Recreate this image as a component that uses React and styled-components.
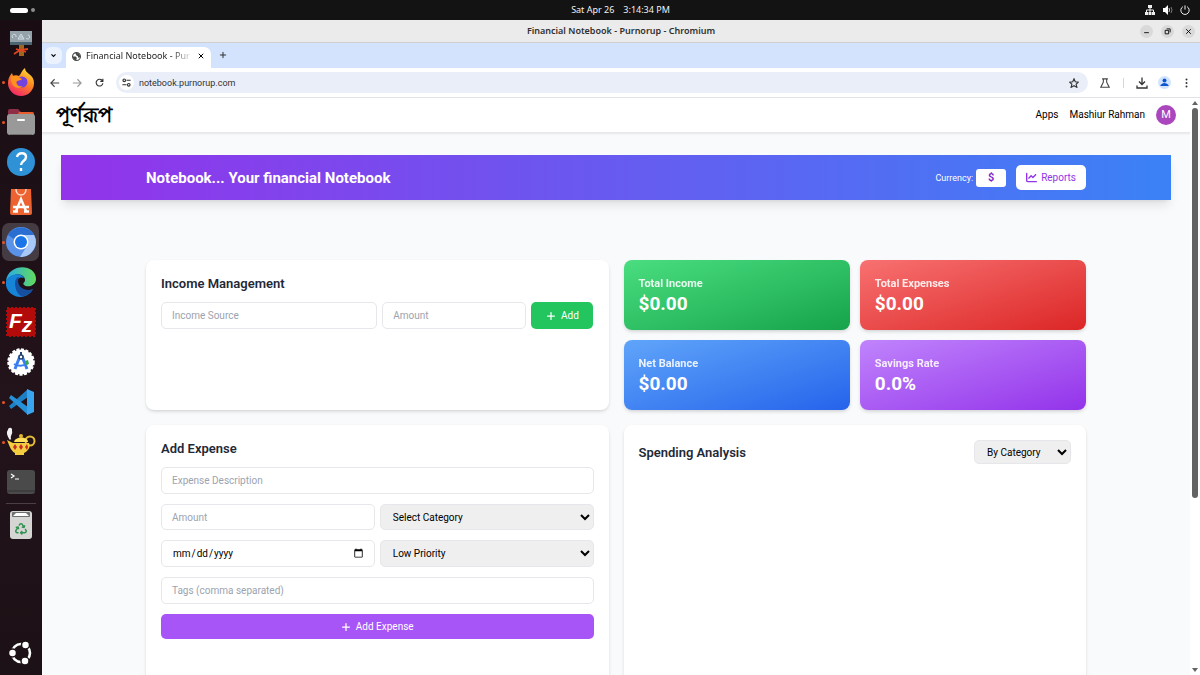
import React from 'react';
import styled, { createGlobalStyle, css } from 'styled-components';
import { FaChartLine, FaPlus, FaRecycle } from 'react-icons/fa6';

const Global = createGlobalStyle`
  *, *::before, *::after { box-sizing: border-box; }
  html, body, #root { height: 100%; }
  body { margin: 0; overflow: hidden; font-family: Roboto, "Liberation Sans", sans-serif; color: #000; }
  button, input, select { font: inherit; margin: 0; }
  h1, h2, h3, p { margin: 0; }
`;

const Desktop = styled.div`
  height: 100vh;
  display: flex;
  flex-direction: column;
  background: #131313;
`;

const TopBar = styled.header`
  flex: none;
  height: 20px;
  padding: 0 10px;
  display: grid;
  grid-template-columns: 1fr auto 1fr;
  align-items: center;
  background: #131313;
  color: #f2f2f2;
  font: 400 9px/12px "Noto Sans", sans-serif;
`;
const Workspaces = styled.div`
  display: flex;
  align-items: center;
  gap: 3px;
`;
const Pill = styled.span`
  width: 18px; height: 5px; border-radius: 3px; background: #fff;
`;
const Dot = styled.span`
  width: 4px; height: 4px; border-radius: 50%; background: #8d8d8d;
`;
const Clock = styled.div`
  margin-left: 41px;
  display: flex;
  gap: 9px;
`;
const Tray = styled.div`
  display: flex;
  justify-content: flex-end;
  align-items: center;
  gap: 7px;
`;

const Body = styled.div`
  flex: 1;
  min-height: 0;
  display: flex;
`;

const Dock = styled.nav`
  flex: none;
  width: 41px;
  padding: 3px 2px 3px;
  display: flex;
  flex-direction: column;
  align-items: center;
  gap: 2px;
  background: linear-gradient(#190d13, #23131b 60%, #1c1116);
`;
const DockItem = styled.button`
  flex: none;
  position: relative;
  width: 37px;
  height: 38px;
  padding: 0;
  border: 0;
  border-radius: 7px;
  display: grid;
  place-items: center;
  background: ${p => (p.$active ? '#453c43' : 'transparent')};
  ${p => p.$running && css`
    &::before {
      content: "";
      position: absolute;
      left: 0; top: 18px;
      width: 3px; height: 3px;
      border-radius: 50%;
      background: #e95420;
    }
  `}
`;
const DockRule = styled.hr`
  width: 30px;
  margin: 0;
  border: 0;
  border-top: 1px solid #4b3f45;
`;
const Spacer = styled.div`
  flex: 1;
`;

const Window = styled.main`
  flex: 1;
  min-width: 0;
  display: flex;
  flex-direction: column;
  margin-left: 1px;
  background: #fff;
`;
const TitleBar = styled.div`
  flex: none;
  height: 23px;
  padding: 0 5px;
  display: grid;
  grid-template-columns: 1fr auto 1fr;
  align-items: center;
  background: #ebebeb;
  border-bottom: 1px solid #cfcfcf;
  color: #2f2f2f;
  font: 600 9px/12px "Noto Sans", sans-serif;
`;
const WindowTitle = styled.span`
  grid-column: 2;
`;
const WindowControls = styled.div`
  display: flex;
  justify-content: flex-end;
  gap: 8px;
`;
const ControlButton = styled.button`
  width: 13px; height: 13px;
  padding: 0; border: 0; border-radius: 50%;
  display: grid; place-items: center;
  background: #d9d9d9;
`;
const TabStrip = styled.div`
  flex: none;
  height: 25px;
  padding: 4px 3px 0;
  display: flex;
  gap: 4px;
  background: #d3e3fd;
`;
const TabSearch = styled.button`
  width: 17px; height: 17px;
  padding: 0; border: 0; border-radius: 6px;
  display: grid; place-items: center;
  background: #ebf2fe;
`;
const Tab = styled.div`
  width: 145px;
  height: 21px;
  padding: 0 7px 3px 6px;
  display: flex;
  align-items: center;
  gap: 5px;
  background: #fff;
  border-radius: 7px 7px 0 0;
  color: #1f1f1f;
  font: 9px/12px "Noto Sans", sans-serif;
`;
const TabTitle = styled.span`
  flex: 1;
  white-space: nowrap;
  mask-image: linear-gradient(90deg, #000 80%, transparent);
`;
const GhostButton = styled.button`
  padding: 0;
  border: 0;
  display: grid;
  place-items: center;
  background: none;
  width: ${p => p.$size || 16}px;
  height: ${p => p.$size || 16}px;
`;
const Toolbar = styled.div`
  flex: none;
  height: 30px;
  padding: 0 6px 0 5px;
  display: flex;
  align-items: center;
  gap: 6px;
  border-bottom: 1px solid #e1e3e8;
`;
const AddressBox = styled.div`
  flex: 1;
  height: 21px;
  margin: 0 3px;
  padding: 0 8px 0 3px;
  display: flex;
  align-items: center;
  gap: 5px;
  border-radius: 11px;
  background: #e9eef9;
`;
const SiteInfo = styled.button`
  width: 15px; height: 15px;
  padding: 0; border: 0; border-radius: 50%;
  display: grid; place-items: center;
  background: #fff;
`;
const AddressInput = styled.input`
  flex: 1;
  min-width: 0;
  padding: 0;
  border: 0;
  outline: 0;
  background: transparent;
  color: #333;
  font: 9px/12px Roboto, sans-serif;
`;
const Divider = styled.span`
  width: 1px; height: 10px; margin: 0 4px; background: #c5daf9;
`;

const Viewport = styled.div`
  flex: 1;
  min-height: 0;
  display: flex;
`;
const Site = styled.div`
  flex: 1;
  min-width: 0;
  overflow: hidden;
  background: #f9fafb;
`;
const Scrollbar = styled.div`
  flex: none;
  width: 10px;
  padding: 3px 2px;
  display: flex;
  flex-direction: column;
  align-items: center;
  gap: 3px;
  background: #fff;
`;
const ScrollTrack = styled.div`
  flex: 1;
  width: 6px;
`;
const ScrollThumb = styled.div`
  height: 70%;
  border-radius: 3px;
  background: #636363;
`;

const SiteHeader = styled.header`
  height: 35px;
  padding: 0 14px;
  display: flex;
  align-items: center;
  gap: 11px;
  background: #fff;
  border-bottom: 1px solid #e5e7eb;
  box-shadow: 0 1px 2px rgba(0, 0, 0, 0.08);
  font-size: 10px;
  line-height: 16px;
`;
const Brand = styled.a`
  margin-right: auto;
  color: #000;
  text-decoration: none;
  font-size: 21px;
  font-weight: 700;
`;
const NavLink = styled.a`
  color: #000;
  text-decoration: none;
`;
const Avatar = styled.span`
  width: 20px; height: 20px;
  border-radius: 50%;
  display: grid; place-items: center;
  background: #ab47bc;
  color: #fff;
  font-size: 11px;
`;

const Banner = styled.section`
  margin: 22px 19px 60px;
  background: linear-gradient(90deg, #9333ea, #3b82f6);
  box-shadow: 0 7px 10px -2px rgba(0, 0, 0, 0.1), 0 3px 4px -3px rgba(0, 0, 0, 0.1);
  color: #fff;
`;
const Container = styled.div`
  max-width: 940px;
  margin: 0 auto;
`;
const BannerRow = styled(Container)`
  height: 45px;
  display: flex;
  align-items: center;
  gap: 10px;
`;
const BannerTitle = styled.h1`
  margin-right: auto;
  font-size: 15px;
  line-height: 20px;
  font-weight: 700;
`;
const Currency = styled.label`
  display: flex;
  align-items: center;
  gap: 3px;
  font-size: 9px;
  line-height: 12px;
`;
const CurrencySelect = styled.select`
  appearance: none;
  width: 30px;
  height: 18px;
  padding: 0;
  border: 0;
  border-radius: 3px;
  background: #fff;
  color: #7e22ce;
  font-size: 11px;
  font-weight: 600;
  text-align: center;
  text-align-last: center;
`;
const ReportsButton = styled.button`
  height: 25px;
  padding: 0 10px;
  border: 0;
  border-radius: 5px;
  display: flex;
  align-items: center;
  gap: 4px;
  background: #fff;
  color: #9333ea;
  font-size: 10px;
`;

const Dashboard = styled(Container)`
  display: grid;
  grid-template-columns: 1fr 1fr;
  grid-template-rows: 150px auto;
  gap: 15px;
`;
const Card = styled.section`
  min-width: 0;
  min-height: ${p => (p.$tall ? '300px' : '0')};
  padding: 15px;
  border-radius: 8px;
  background: #fff;
  box-shadow: 0 2px 4px -1px rgba(0, 0, 0, 0.15), 0 1px 3px -1px rgba(0, 0, 0, 0.1);
`;
const CardTitle = styled.h2`
  font-size: 13px;
  line-height: 17px;
  font-weight: 600;
  color: #1f2937;
`;
const CardHead = styled.div`
  display: flex;
  justify-content: space-between;
  align-items: center;
`;
const IncomeForm = styled.form`
  margin-top: 10px;
  display: grid;
  grid-template-columns: 3fr 2fr 62px;
  grid-template-rows: 27px;
  gap: 5px;
`;
const ExpenseForm = styled.form`
  margin-top: 10px;
  display: grid;
  grid-template-columns: 1fr 1fr;
  grid-template-rows: 27px 26px 27px 27px 25px;
  gap: 10px 5px;
`;
const fieldStyle = css`
  min-width: 0;
  width: 100%;
  height: 100%;
  border: 1px solid #e5e7eb;
  border-radius: 5px;
  font-size: 10px;
  grid-column: ${p => (p.$wide ? '1 / -1' : 'auto')};
`;
const Field = styled.input`
  ${fieldStyle}
  padding: 0 10px;
  background: #fff;
  color: #000;
  &::placeholder { color: #9ca3af; opacity: 1; }
  &::-webkit-calendar-picker-indicator { width: 11px; height: 11px; padding: 0; }
`;
const Select = styled.select`
  ${fieldStyle}
  padding: 0 0 0 8px;
  background: #efefef;
  color: #000;
`;
const ViewSelect = styled(Select)`
  width: 97px;
  height: 24px;
`;
const SubmitButton = styled.button`
  padding: 0;
  border: 0;
  border-radius: 5px;
  display: flex;
  align-items: center;
  justify-content: center;
  gap: 5px;
  background: ${p => p.$color};
  color: #fff;
  font-size: 10px;
  grid-column: ${p => (p.$wide ? '1 / -1' : 'auto')};
`;
const Stats = styled.section`
  display: grid;
  grid-template-columns: 1fr 1fr;
  gap: 10px;
`;
const Stat = styled.article`
  padding: 15px;
  border-radius: 8px;
  background: linear-gradient(to bottom right, ${p => p.$from}, ${p => p.$to});
  box-shadow: 0 2px 4px -1px rgba(0, 0, 0, 0.2);
  color: #fff;
`;
const StatLabel = styled.h3`
  font-size: 11px;
  line-height: 18px;
  font-weight: 700;
  opacity: 0.88;
`;
const StatValue = styled.p`
  font-size: 19px;
  line-height: 22px;
  font-weight: 700;
`;

const Stroke = ({ size = 10, w = 2, color = 'currentColor', children }) => (
  <svg width={size} height={size} viewBox="0 0 24 24" fill="none" stroke={color} strokeWidth={w} aria-hidden="true">{children}</svg>
);

const art = {
  Board: (
    <svg width="26" height="28" viewBox="0 0 26 28">
      <path d="M2 3h22v13H2z" fill="#95a2a9" /><path d="M2 14h22v3H2z" fill="#4c6470" />
      <path d="M5 10a2 2 0 1 1 3-1M10 11l3-5 3 5zM12 9h3M18 10a2 2 0 1 0 2-3" fill="none" stroke="#d4dde2" />
      <path d="M11 17h5v11h-5z" fill="#a0651f" /><path d="M6 26l6-4 8-1M8 21l10 3" fill="none" stroke="#e2451e" strokeWidth="1.800" />
    </svg>
  ),
  Firefox: (
    <svg width="28" height="28" viewBox="0 0 28 28">
      <defs><linearGradient id="ff" x1=".8" y1="0" x2=".3" y2="1"><stop offset="0" stopColor="#ffe23e" /><stop offset=".45" stopColor="#ff8a1e" /><stop offset="1" stopColor="#f0246c" /></linearGradient></defs>
      <path d="M18 0c0 3 2 4 4 6 3 2 5 5 5 9a13 13 0 0 1-26 0c0-3 1-7 4-10l1 3c2-1 4-1 6 0 2-2 3-6 6-8z" fill="url(#ff)" />
      <circle cx="15" cy="14" r="5.500" fill="#7442de" />
      <path d="M4 8c4-1 7 0 11 3-1 2-5 1-6 3 0 3 3 5 7 4-6 5-13 0-12-10z" fill="#ff911f" />
    </svg>
  ),
  Files: (
    <svg width="28" height="26" viewBox="0 0 28 26">
      <path d="M1 2q0-2 2-2h8l3 3h11q2 0 2 2v12H1z" fill="#8e2f47" /><path d="M12 3h13q2 0 2 2v6H8z" fill="#e95c2c" />
      <rect y="5" width="28" height="21" rx="3" fill="#999" /><path d="M3 25.500h22" stroke="#707070" /><rect x="10" y="10" width="8" height="2" rx="1" fill="#fff" />
    </svg>
  ),
  Help: (
    <svg width="28" height="28" viewBox="0 0 28 28">
      <circle cx="14" cy="14" r="14" fill="#2f91d6" />
      <path d="M10 9c1-5 9-5 9 0 0 4-5 4-5 8M14 20v3" fill="none" stroke="#fff" strokeWidth="2.400" />
    </svg>
  ),
  Store: (
    <svg width="24" height="28" viewBox="0 0 24 28">
      <path d="M2 1h20l1 24q0 2-2 2H3q-2 0-2-2z" fill="#ec6331" />
      <path d="M7 1c0 8 10 8 10 0" fill="none" stroke="#ffd9c9" strokeWidth="1.500" />
      <path d="M7 23l5-12 5 12M4 19h16M4 23.500h5M15 23.500h5" fill="none" stroke="#fff" strokeWidth="2.400" />
    </svg>
  ),
  Chromium: (
    <svg width="30" height="30" viewBox="0 0 30 30">
      <circle cx="15" cy="15" r="15" fill="#5a92e8" />
      <path d="M15 8h13a15 15 0 0 1-14 22l7-11z" fill="#a8c8f8" />
      <path d="M2 8a15 15 0 0 1 26 0H15l-7 4z" fill="#2b6ed2" />
      <circle cx="15" cy="15" r="7.500" fill="#fff" /><circle cx="15" cy="15" r="6" fill="#1b74e8" />
    </svg>
  ),
  Edge: (
    <svg width="30" height="30" viewBox="0 0 30 30">
      <defs><linearGradient id="eg"><stop stopColor="#2aa9e8" /><stop offset="1" stopColor="#62dc5b" /></linearGradient></defs>
      <path d="M0 14C2-4 30-4 30 12c0 7-9 9-12 6-2-2 1-2 1-5 0-7-13-8-19 1z" fill="url(#eg)" />
      <path d="M0 14c5-9 16-8 18-3-5-2-8 2-7 7 2 6 9 8 16 4-4 8-14 10-20 6-5-3-8-8-7-14z" fill="#1685d8" />
      <path d="M9 16c0-3 2-6 4-6-3 7 2 13 10 13 2 0 3-1 4-1-3 6-9 8-12 7-4-2-6-8-6-13z" fill="#174fa0" />
    </svg>
  ),
  FileZilla: (
    <svg width="30" height="30" viewBox="0 0 30 30">
      <rect x="1" y="1" width="28" height="28" fill="#b30a0a" stroke="#b30a0a" strokeWidth="2" strokeDasharray="2 2" />
      <text x="3" y="21" fill="#fff" fontFamily="Liberation Sans, sans-serif" fontSize="21" fontWeight="700" fontStyle="italic">F<tspan dy="4">z</tspan></text>
    </svg>
  ),
  Studio: (
    <svg width="28" height="28" viewBox="0 0 28 28">
      <circle cx="14" cy="14" r="12.500" fill="#fff" stroke="#fff" strokeWidth="2.500" strokeDasharray="3 1.500" />
      <path d="M13 8L8 21M15 8l5 13" stroke="#3b7df0" strokeWidth="3" /><path d="M7 16q7 4 14-1" fill="none" stroke="#3b7df0" strokeWidth="2" />
      <circle cx="14" cy="9" r="2" fill="#fff" stroke="#25436e" strokeWidth="1.500" /><path d="M14 4v3" stroke="#25436e" strokeWidth="2" /><path d="M18 13l3-1 1 4-3 1z" fill="#37a852" />
    </svg>
  ),
  Code: (
    <svg width="28" height="28" viewBox="0 0 28 28">
      <path d="M2 18l19-17v8L4 21z" fill="#1d7fc4" /><path d="M2 10l19 17v-8L4 7z" fill="#2691d8" /><path d="M20 1l7 3v20l-7 3z" fill="#38a5ee" />
    </svg>
  ),
  Teapot: (
    <svg width="31" height="30" viewBox="0 0 31 30">
      <path d="M5 13c-3-4-4-8-2-10 0-3 5-3 4 1 1 3-2 4-1 8z" fill="#f2f2f2" />
      <circle cx="25" cy="14" r="4.500" fill="none" stroke="#e7bd32" strokeWidth="2" />
      <path d="M2 13l6 3h16c2 4-1 8-5 10v2H10v-2c-4-2-5-6-8-13z" fill="#f2cd3f" />
      <path d="M9 15c1-6 14-6 14 0z" fill="#ffe05a" /><circle cx="16" cy="9" r="2" fill="#e4b82b" />
      <path d="M10 17l2 3-2 3-2-3zM16 17l2 3-2 3-2-3zM22 17l1 3-1 3-2-3z" fill="#c92a2a" />
    </svg>
  ),
  Terminal: (
    <svg width="28" height="24" viewBox="0 0 28 24">
      <rect width="28" height="24" rx="3" fill="#4a4a4a" /><path d="M0 21h28" stroke="#333" />
      <path d="M4 4l3 2-3 2M8 9h4" fill="none" stroke="#fff" strokeWidth="1.200" />
    </svg>
  ),
  Trash: (
    <svg width="24" height="28" viewBox="0 0 24 28">
      <rect x="1" width="22" height="28" rx="3" fill="#d5d5d3" /><rect x="3" y="1" width="18" height="5" rx="1" fill="#6f6f6f" /><path d="M4 5l3-3h10l3 3z" fill="#fff" />
      <FaRecycle x="6" y="12" size={12} color="#329152" />
    </svg>
  ),
  Ubuntu: (
    <svg width="24" height="24" viewBox="0 0 24 24">
      <circle cx="12" cy="12" r="9" fill="none" stroke="#fff" strokeWidth="2.600" />
      <g fill="#fff" stroke="#1e1217" strokeWidth="1.500"><circle cx="16.500" cy="4" r="4" /><circle cx="3.500" cy="12" r="4" /><circle cx="16" cy="20" r="4" /></g>
    </svg>
  ),
};

const apps = [
  ['Board', art.Board], ['Firefox', art.Firefox, 1], ['Files', art.Files, 1], ['Help', art.Help], ['App Center', art.Store],
  ['Chromium', art.Chromium, 1, 1], ['Edge', art.Edge, 1], ['FileZilla', art.FileZilla], ['Android Studio', art.Studio],
  ['Visual Studio Code', art.Code, 1], ['Teapot', art.Teapot, 1], ['Terminal', art.Terminal],
];
const stats = [
  ['Total Income', '$0.00', '#4ade80', '#16a34a'],
  ['Total Expenses', '$0.00', '#f87171', '#dc2626'],
  ['Net Balance', '$0.00', '#60a5fa', '#2563eb'],
  ['Savings Rate', '0.0%', '#c084fc', '#9333ea'],
];

export default function App() {
  return (
    <Desktop>
      <Global />
      <TopBar>
        <Workspaces><Pill /><Dot /></Workspaces>
        <Clock><span>Sat Apr 26</span><span>3:14:34 PM</span></Clock>
        <Tray>
          <svg width="10" height="10" viewBox="0 0 10 10" fill="#eee"><path d="M3 0h4v3H3zM0 7h3v3H0zM3.500 7h3v3h-3zM7 7h3v3H7z" /><path d="M5 3v4M1.500 7V5h7v2" stroke="#eee" fill="none" /></svg>
          <svg width="11" height="10" viewBox="0 0 11 10" fill="none" stroke="#777"><path d="M1 3h2l3-3v10L3 7H1z" fill="#fff" stroke="none" /><path d="M7 3q1 2 0 4" stroke="#ccc" /><path d="M9 2q2 3 0 6" /></svg>
          <Stroke size={10} w={2.400}><path d="M7 4a10 10 0 1 0 10 0M12 1v10" /></Stroke>
        </Tray>
      </TopBar>
      <Body>
        <Dock aria-label="Dock">
          {apps.map(([name, icon, running, active]) => (
            <DockItem key={name} aria-label={name} $running={running} $active={active}>{icon}</DockItem>
          ))}
          <DockRule />
          <DockItem aria-label="Trash">{art.Trash}</DockItem>
          <Spacer />
          <DockItem aria-label="Show applications">{art.Ubuntu}</DockItem>
        </Dock>
        <Window>
          <TitleBar>
            <WindowTitle>Financial Notebook - Purnorup - Chromium</WindowTitle>
            <WindowControls>
              <ControlButton aria-label="Minimize"><Stroke size={7} w={3}><path d="M4 16h16" /></Stroke></ControlButton>
              <ControlButton aria-label="Restore"><Stroke size={7} w={3}><path d="M4 8h12v12H4zM9 3h12v12" /></Stroke></ControlButton>
              <ControlButton aria-label="Close window"><Stroke size={7} w={3}><path d="M4 4l16 16M20 4L4 20" /></Stroke></ControlButton>
            </WindowControls>
          </TitleBar>
          <TabStrip>
            <TabSearch aria-label="Search tabs"><Stroke size={7} w={4}><path d="M5 8l7 7 7-7" /></Stroke></TabSearch>
            <Tab>
              <svg width="9" height="9" viewBox="0 0 24 24"><circle cx="12" cy="12" r="10.500" fill="#fff" stroke="#454746" strokeWidth="3" /><path d="M2 12h8l3 4-2 6C4 21 2 16 2 12zM9 3l3 6 4 2v4l6-1C22 6 16 1 9 3z" fill="#454746" /></svg>
              <TabTitle>Financial Notebook - Pur</TabTitle>
              <GhostButton $size={6} aria-label="Close tab"><Stroke size={6} w={4}><path d="M3 3l18 18M21 3L3 21" /></Stroke></GhostButton>
            </Tab>
            <GhostButton aria-label="New tab"><FaPlus size={8} color="#333" /></GhostButton>
          </TabStrip>
          <Toolbar>
            <GhostButton aria-label="Back"><Stroke size={10} w={2.600} color="#444"><path d="M22 12H3M11 3l-9 9 9 9" /></Stroke></GhostButton>
            <GhostButton aria-label="Forward"><Stroke size={10} w={2.600} color="#999"><path d="M2 12h19M13 3l9 9-9 9" /></Stroke></GhostButton>
            <GhostButton aria-label="Reload"><Stroke size={9} w={3} color="#333"><path d="M20 8a9 9 0 1 0 1 6M21 2v7h-7" /></Stroke></GhostButton>
            <AddressBox>
              <SiteInfo aria-label="Site information"><Stroke size={9} w={3} color="#333"><circle cx="6" cy="6" r="3.500" /><path d="M12 6h11M1 18h11" /><circle cx="18" cy="18" r="3.500" /></Stroke></SiteInfo>
              <AddressInput aria-label="Address" defaultValue="notebook.purnorup.com" />
              <GhostButton $size={12} aria-label="Bookmark"><Stroke size={10} w={2.600} color="#333"><path d="M12 2l3 7 7.500 1-5.500 5 2 7.500-7-4-7 4 2-7.500L1.500 10 9 9z" /></Stroke></GhostButton>
            </AddressBox>
            <GhostButton aria-label="Labs"><Stroke size={10} w={2.600} color="#444"><path d="M5 2h14M8 2v8L2 22h20l-6-12V2" /></Stroke></GhostButton>
            <Divider />
            <GhostButton aria-label="Downloads"><Stroke size={12} w={2.600} color="#333"><path d="M12 1v14M6 9l6 6 6-6M2 17v5h20v-5" /></Stroke></GhostButton>
            <GhostButton aria-label="Profile"><svg width="13" height="13" viewBox="0 0 13 13"><circle cx="6.500" cy="6.500" r="6.500" fill="#d3e3fd" /><circle cx="6.500" cy="4.500" r="2" fill="#0b57d0" /><path d="M2.500 10V9q4-4 8 0v1z" fill="#0b57d0" /></svg></GhostButton>
            <GhostButton aria-label="Menu"><svg width="3" height="10" viewBox="0 0 3 10" fill="#333"><circle cx="1.500" cy="1.500" r="1" /><circle cx="1.500" cy="5" r="1" /><circle cx="1.500" cy="8.500" r="1" /></svg></GhostButton>
          </Toolbar>
          <Viewport>
            <Site>
              <SiteHeader>
                <Brand href="#" lang="bn">পূর্ণরূপ</Brand>
                <NavLink href="#apps">Apps</NavLink>
                <NavLink href="#account">Mashiur Rahman</NavLink>
                <Avatar>M</Avatar>
              </SiteHeader>
              <Banner>
                <BannerRow>
                  <BannerTitle>Notebook... Your financial Notebook</BannerTitle>
                  <Currency>Currency:<CurrencySelect><option>$</option></CurrencySelect></Currency>
                  <ReportsButton><FaChartLine size={11} />Reports</ReportsButton>
                </BannerRow>
              </Banner>
              <Dashboard>
                <Card>
                  <CardTitle>Income Management</CardTitle>
                  <IncomeForm onSubmit={e => e.preventDefault()}>
                    <Field aria-label="Income Source" placeholder="Income Source" />
                    <Field aria-label="Income amount" placeholder="Amount" />
                    <SubmitButton $color="#22c55e"><FaPlus size={10} />Add</SubmitButton>
                  </IncomeForm>
                </Card>
                <Stats>
                  {stats.map(([label, value, from, to]) => (
                    <Stat key={label} $from={from} $to={to}><StatLabel>{label}</StatLabel><StatValue>{value}</StatValue></Stat>
                  ))}
                </Stats>
                <Card $tall>
                  <CardTitle>Add Expense</CardTitle>
                  <ExpenseForm onSubmit={e => e.preventDefault()}>
                    <Field $wide aria-label="Expense Description" placeholder="Expense Description" />
                    <Field aria-label="Expense amount" placeholder="Amount" />
                    <Select aria-label="Category"><option>Select Category</option></Select>
                    <Field type="date" aria-label="Date" />
                    <Select aria-label="Priority"><option>Low Priority</option></Select>
                    <Field $wide aria-label="Tags" placeholder="Tags (comma separated)" />
                    <SubmitButton $wide $color="#a855f7"><FaPlus size={10} />Add Expense</SubmitButton>
                  </ExpenseForm>
                </Card>
                <Card $tall>
                  <CardHead>
                    <CardTitle>Spending Analysis</CardTitle>
                    <ViewSelect aria-label="Group by"><option>By Category</option></ViewSelect>
                  </CardHead>
                </Card>
              </Dashboard>
            </Site>
            <Scrollbar aria-hidden="true">
              <svg width="6" height="4" viewBox="0 0 6 4" fill="#636363"><path d="M0 4l3-4 3 4z" /></svg>
              <ScrollTrack><ScrollThumb /></ScrollTrack>
              <svg width="6" height="4" viewBox="0 0 6 4" fill="#636363"><path d="M0 0l3 4 3-4z" /></svg>
            </Scrollbar>
          </Viewport>
        </Window>
      </Body>
    </Desktop>
  );
}
